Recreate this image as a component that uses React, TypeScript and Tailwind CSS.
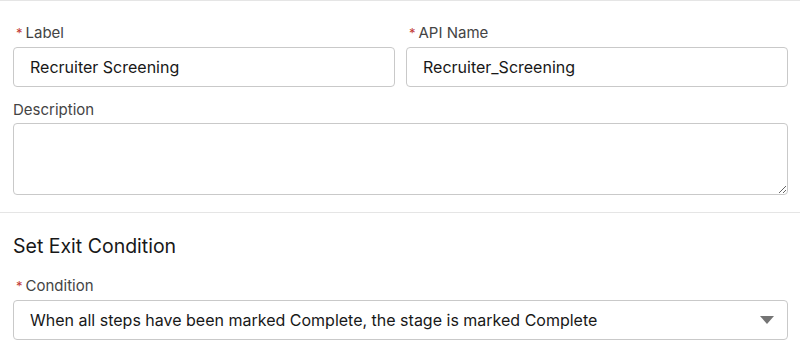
import { ReactNode } from "react"

const font = { fontFamily: 'Inter, "Noto Sans", "Liberation Sans", sans-serif' }

function FieldLabel({ children, required }: { children: ReactNode; required?: boolean }) {
  return (
    <label className="flex items-center h-5 text-[15px] leading-5 text-[#444444]">
      {required && <span className="text-[#c23934] mr-[3px] ml-[3px] text-[13px]">*</span>}
      {children}
    </label>
  )
}

export default function App() {
  return (
    <div className="w-[800px] h-[364px] bg-white border-t border-[#e5e5e5] overflow-hidden" style={font}>
      {/* Details */}
      <div className="pl-[13px] pr-3 pt-[22px] pb-[17px] border-b border-[#e5e5e5]">
        <div className="grid grid-cols-2 gap-[11px]">
          <div className="flex flex-col gap-1">
            <FieldLabel required>Label</FieldLabel>
            <input
              readOnly
              value="Recruiter Screening"
              className="h-10 w-full rounded-[4px] border border-[#c9c9c9] px-4 text-[16px] text-[#181818] outline-none"
            />
          </div>
          <div className="flex flex-col gap-1">
            <FieldLabel required>API Name</FieldLabel>
            <input
              readOnly
              value="Recruiter_Screening"
              className="h-10 w-full rounded-[4px] border border-[#c9c9c9] px-4 text-[16px] text-[#181818] outline-none"
            />
          </div>
        </div>
        <div className="mt-[13px] flex flex-col gap-[3px]">
          <FieldLabel>Description</FieldLabel>
          <textarea
            readOnly
            className="h-[72px] w-full rounded-[4px] border border-[#c9c9c9] px-4 py-2 text-[16px] outline-none resize-y"
          />
        </div>
      </div>

      {/* Exit condition */}
      <div className="pl-[13px] pr-3 pt-[19px]">
        <h2 className="text-[19.5px] leading-7 text-[#181818]">Set Exit Condition</h2>
        <div className="mt-4 flex flex-col gap-1">
          <FieldLabel required>Condition</FieldLabel>
          <div className="h-10 w-full rounded-[4px] border border-[#c9c9c9] pl-4 pr-3 flex items-center justify-between text-[16px] text-[#181818]">
            <span>When all steps have been marked Complete, the stage is marked Complete</span>
            <svg width="14" height="8" viewBox="0 0 14 8" className="mr-px">
              <path d="M0 0h14L7 8z" fill="#747474" />
            </svg>
          </div>
        </div>
      </div>
    </div>
  )
}
